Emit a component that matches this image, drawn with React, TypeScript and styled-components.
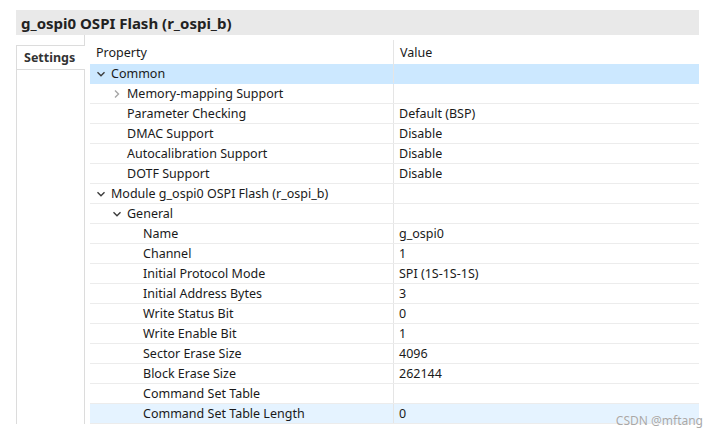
import React from 'react';
import styled, { createGlobalStyle } from 'styled-components';

const GlobalStyle = createGlobalStyle`
  html, body {
    margin: 0;
    padding: 0;
    background: #ffffff;
  }
  body {
    font-family: 'Noto Sans', 'Open Sans', sans-serif;
    color: #1a1a1a;
  }
`;

const Page = styled.div`
  position: relative;
  width: 717px;
  height: 435px;
  padding: 10px 18px 0 16px;
  box-sizing: border-box;
`;

const TitleBar = styled.div`
  height: 25px;
  background: #e9e9e9;
  display: flex;
  align-items: center;
  padding-left: 5px;
  font-size: 15px;
  font-weight: 700;
  color: #222;
`;

const Body = styled.div`
  display: flex;
  height: 389px;
`;

const TabColumn = styled.div`
  width: 69px;
  display: flex;
  flex-direction: column;
`;

const TabGap = styled.div`
  height: 10px;
  border-right: 1px solid #dcdcdc;
`;

const Tab = styled.div`
  height: 23px;
  border-top: 1px solid #dcdcdc;
  border-bottom: 1px solid #dcdcdc;
  border-left: 1px solid #dcdcdc;
  display: flex;
  align-items: center;
  padding-left: 7px;
  font-size: 12.5px;
  font-weight: 700;
  color: #333;
`;

const TabRest = styled.div`
  flex: 1;
  border-left: 1px solid #dcdcdc;
  border-right: 1px solid #dcdcdc;
`;

const Table = styled.div`
  flex: 1;
  margin-left: 5px;
  padding-top: 5px;
  display: flex;
  flex-direction: column;
`;

const Columns = styled.div`
  display: grid;
  grid-template-columns: 304px 1fr;
`;

const HeaderRow = styled(Columns)`
  height: 24px;
  font-size: 12.5px;
`;

const HeaderCell = styled.div<{ $divider?: boolean }>`
  display: flex;
  align-items: center;
  padding-left: 6px;
  border-right: ${(p) => (p.$divider ? '1px solid #e5e5e5' : 'none')};
`;

const Row = styled(Columns)<{ $tone?: 'selected' | 'hover' }>`
  height: 19px;
  border-bottom: 1px solid #ececec;
  font-size: 12.5px;
  line-height: 19px;
  background: ${(p) =>
    p.$tone === 'selected' ? '#cce8ff' : p.$tone === 'hover' ? '#e5f3ff' : 'transparent'};
  border-bottom-color: ${(p) => (p.$tone === 'selected' ? '#cce8ff' : '#ececec')};
`;

const NameCell = styled.div<{ $level: number }>`
  display: flex;
  align-items: center;
  padding-left: ${(p) => 6 + p.$level * 16}px;
  border-right: 1px solid #e5e5e5;
  white-space: nowrap;
`;

const ValueCell = styled.div`
  padding-left: 5px;
  white-space: nowrap;
`;

const Toggle = styled.span`
  width: 15px;
  height: 19px;
  display: inline-flex;
  align-items: center;
  flex: none;
`;

const Watermark = styled.div`
  position: absolute;
  right: 14px;
  bottom: 6px;
  font-size: 12px;
  color: #a8a8a8;
  font-family: 'Noto Sans', sans-serif;
  text-shadow: 0 0 1px #fff;
`;

type Kind = 'open' | 'closed' | 'leaf';

interface Item {
  label: string;
  value?: string;
  level: number;
  kind: Kind;
  tone?: 'selected' | 'hover';
}

const rows: Item[] = [
  { label: 'Common', level: 0, kind: 'open', tone: 'selected' },
  { label: 'Memory-mapping Support', level: 1, kind: 'closed' },
  { label: 'Parameter Checking', value: 'Default (BSP)', level: 1, kind: 'leaf' },
  { label: 'DMAC Support', value: 'Disable', level: 1, kind: 'leaf' },
  { label: 'Autocalibration Support', value: 'Disable', level: 1, kind: 'leaf' },
  { label: 'DOTF Support', value: 'Disable', level: 1, kind: 'leaf' },
  { label: 'Module g_ospi0 OSPI Flash (r_ospi_b)', level: 0, kind: 'open' },
  { label: 'General', level: 1, kind: 'open' },
  { label: 'Name', value: 'g_ospi0', level: 2, kind: 'leaf' },
  { label: 'Channel', value: '1', level: 2, kind: 'leaf' },
  { label: 'Initial Protocol Mode', value: 'SPI (1S-1S-1S)', level: 2, kind: 'leaf' },
  { label: 'Initial Address Bytes', value: '3', level: 2, kind: 'leaf' },
  { label: 'Write Status Bit', value: '0', level: 2, kind: 'leaf' },
  { label: 'Write Enable Bit', value: '1', level: 2, kind: 'leaf' },
  { label: 'Sector Erase Size', value: '4096', level: 2, kind: 'leaf' },
  { label: 'Block Erase Size', value: '262144', level: 2, kind: 'leaf' },
  { label: 'Command Set Table', level: 2, kind: 'leaf' },
  { label: 'Command Set Table Length', value: '0', level: 2, kind: 'leaf', tone: 'hover' },
];

const Chevron = ({ kind }: { kind: Kind }) => {
  if (kind === 'leaf') return <Toggle />;
  return (
    <Toggle>
      {kind === 'open' ? (
        <svg width="10" height="8" viewBox="0 0 10 8">
          <path d="M1.5 2.2 L5 5.7 L8.5 2.2" fill="none" stroke="#3c3c3c" strokeWidth="1.4" />
        </svg>
      ) : (
        <svg width="10" height="10" viewBox="0 0 10 10">
          <path d="M3 1.5 L6.5 5 L3 8.5" fill="none" stroke="#a6a6a6" strokeWidth="1.4" />
        </svg>
      )}
    </Toggle>
  );
};

const App = () => (
  <>
    <GlobalStyle />
    <Page>
      <TitleBar>g_ospi0 OSPI Flash (r_ospi_b)</TitleBar>
      <Body>
        <TabColumn>
          <TabGap />
          <Tab>Settings</Tab>
          <TabRest />
        </TabColumn>
        <Table>
          <HeaderRow>
            <HeaderCell $divider>Property</HeaderCell>
            <HeaderCell>Value</HeaderCell>
          </HeaderRow>
          {rows.map((r) => (
            <Row key={r.label} $tone={r.tone}>
              <NameCell $level={r.level}>
                <Chevron kind={r.kind} />
                {r.label}
              </NameCell>
              <ValueCell>{r.value}</ValueCell>
            </Row>
          ))}
        </Table>
      </Body>
      <Watermark>CSDN @mftang</Watermark>
    </Page>
  </>
);

export default App;
